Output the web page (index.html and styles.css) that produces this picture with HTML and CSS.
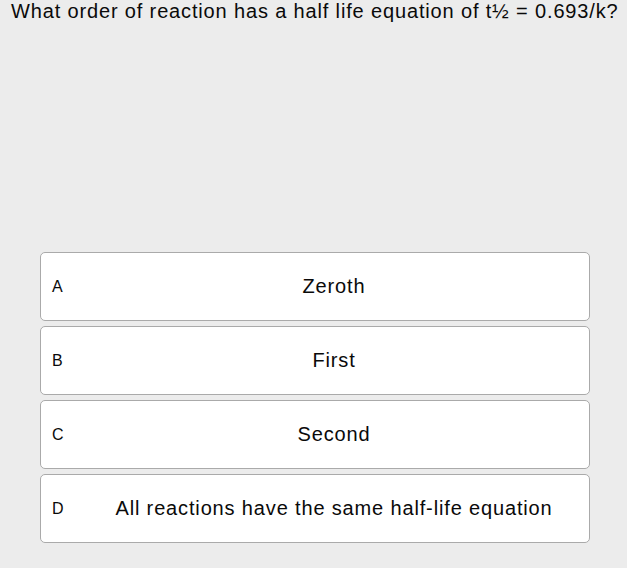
FILE: index.html
```html
<!DOCTYPE html>
<html>
<head>
<meta charset="utf-8">
<link rel="stylesheet" href="styles.css">
</head>
<body>
<div class="quiz">
  <h1 class="question">What order of reaction has a half life equation of t½ = 0.693/k?</h1>
  <div class="options">
    <div class="option"><span class="letter">A</span><span class="answer">Zeroth</span></div>
    <div class="option"><span class="letter">B</span><span class="answer">First</span></div>
    <div class="option"><span class="letter">C</span><span class="answer">Second</span></div>
    <div class="option"><span class="letter">D</span><span class="answer">All reactions have the same half-life equation</span></div>
  </div>
</div>
</body>
</html>
```
FILE: styles.css
```css
html, body {
  margin: 0;
  padding: 0;
  background: #ececec;
  font-family: "Liberation Sans", Arial, sans-serif;
  color: #0a0a0a;
}
.quiz {
  display: flex;
  flex-direction: column;
}
.question {
  margin: 0;
  padding-left: 11px;
  font-size: 20px;
  font-weight: normal;
  line-height: 23px;
  letter-spacing: 0.85px;
  white-space: nowrap;
}
.options {
  margin-top: 229px;
  padding: 0 37px 0 40px;
  display: flex;
  flex-direction: column;
  gap: 5px;
}
.option {
  box-sizing: border-box;
  height: 69px;
  background: #fff;
  border: 1px solid #aaa;
  border-radius: 5px;
  display: flex;
  align-items: center;
}
.letter {
  width: 38px;
  padding-left: 11px;
  box-sizing: border-box;
  font-size: 16px;
  letter-spacing: 0.5px;
}
.answer {
  flex: 1;
  text-align: center;
  font-size: 20px;
  letter-spacing: 0.85px;
}
```
